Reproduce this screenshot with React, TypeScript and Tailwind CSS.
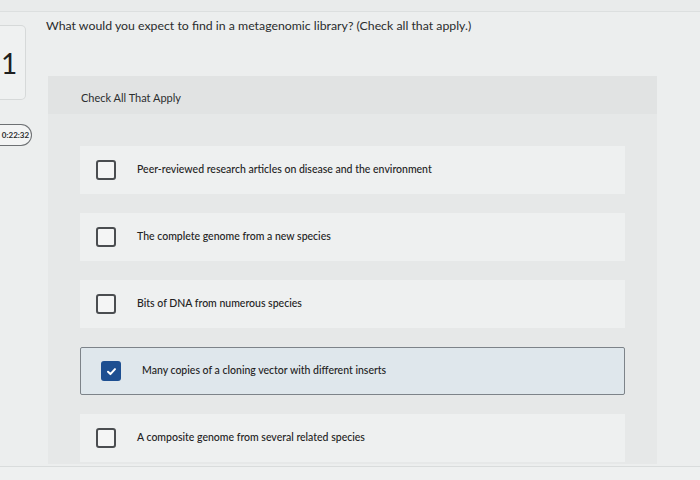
import React from 'react';

const options = [
  { label: 'Peer-reviewed research articles on disease and the environment', checked: false },
  { label: 'The complete genome from a new species', checked: false },
  { label: 'Bits of DNA from numerous species', checked: false },
  { label: 'Many copies of a cloning vector with different inserts', checked: true },
  { label: 'A composite genome from several related species', checked: false },
];

function Checkbox({ checked }: { checked: boolean }) {
  if (checked) {
    return (
      <span className="flex h-[20px] w-[20px] shrink-0 items-center justify-center rounded-[3px] bg-[#1d4f91]">
        <svg viewBox="0 0 12 12" className="h-[11px] w-[11px]">
          <path d="M2.2 6.3 L4.8 8.8 L9.8 3.4" fill="none" stroke="#fff" strokeWidth="2.2" strokeLinecap="round" strokeLinejoin="round" />
        </svg>
      </span>
    );
  }
  return <span className="h-[20px] w-[20px] shrink-0 rounded-[3px] border-2 border-[#4a4d50] bg-[#f4f5f5]" />;
}

export default function App() {
  return (
    <div className="relative h-[480px] w-[700px] overflow-hidden bg-[#eceeee] font-['Lato',_'Liberation_Sans',_sans-serif] text-[#262829]">
      <div className="h-[12px] border-b border-[#dcdfdf] bg-[#e9ebeb]" />
      <div className="flex">
        {/* left rail */}
        <div className="flex w-[46px] shrink-0 flex-col">
          <div className="mt-[13px] flex h-[75px] w-[26px] items-center rounded-r-[5px] border border-l-0 border-[#d6d9d9] bg-[#eff1f1]">
            <span className="ml-[1px] text-[28px] leading-none text-[#1e1f20]">1</span>
          </div>
          <div className="mt-[24px] flex h-[22px] w-[32px] items-center justify-center rounded-r-full rounded-l-[4px] border border-l-0 border-[#6d7073] bg-[#f3f4f4] text-[8px] font-bold text-[#2a2b2c]">
            0:22:32
          </div>
        </div>

        {/* main */}
        <div className="flex w-[611px] flex-col">
          <p className="mt-[5px] text-[12.3px] leading-[18px] text-[#2a2c2d]">
            What would you expect to find in a metagenomic library? (Check all that apply.)
          </p>
          <div className="ml-[2px] mt-[41px] flex h-[388px] flex-col bg-[#e6e8e8]">
            <div className="flex h-[38px] items-center bg-[#e1e3e3] pl-[33px] pt-[6px] text-[11px] text-[#2c2e2f]">
              Check All That Apply
            </div>
            <div className="flex flex-col gap-[19px] px-[32px] pt-[32px]">
              {options.map((o) =>
                <div
                  key={o.label}
                  className={
                    o.checked
                      ? 'flex h-[48px] items-center gap-[17px] rounded-[2px] border border-[#7d8389] bg-[#dfe7ec] pl-[20px] text-[10.5px] font-medium text-[#222]'
                      : 'flex h-[48px] items-center gap-[17px] bg-[#eef0f0] pl-[16px] text-[10.5px] font-medium text-[#222]'
                  }
                >
                  <Checkbox checked={o.checked} />
                  <span className="pl-[4px]">{o.label}</span>
                </div>
              )}
            </div>
          </div>
        </div>
      </div>
      <div className="absolute bottom-0 left-0 h-[14px] w-full border-t border-[#d9dcdc] bg-[#eef0f0]" />
    </div>
  );
}
